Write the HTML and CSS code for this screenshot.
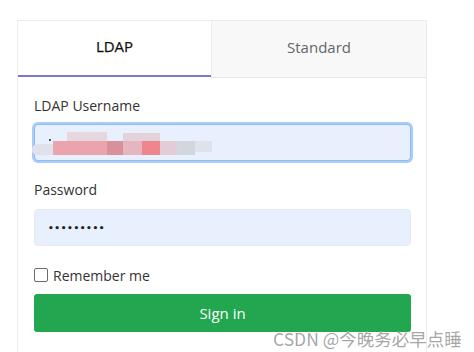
FILE: index.html
```html
<!DOCTYPE html>
<html>
<head>
<meta charset="utf-8">
<link rel="stylesheet" href="styles.css">
</head>
<body>
<div class="card">
  <div class="tabs">
    <div class="tab active">LDAP</div>
    <div class="tab">Standard</div>
  </div>
  <form class="form">
    <label class="label">LDAP Username</label>
    <div class="field">
      <input class="input focused" type="text" value="">
      <div class="mosaic">
        <span class="m m1"></span><span class="m m2"></span><span class="m m3"></span><span class="m m4"></span>
        <span class="m m5"></span><span class="m m6"></span><span class="m m7"></span><span class="m m8"></span>
        <span class="m m9"></span><span class="m m10"></span><span class="m m11"></span>
      </div>
    </div>
    <label class="label pw">Password</label>
    <div class="pwbox">•••••••••</div>
    <div class="remember">
      <span class="check"></span>
      <span>Remember me</span>
    </div>
    <button class="btn" type="button">Sign in</button>
  </form>
</div>
<div class="watermark">CSDN @今晚务必早点睡</div>
</body>
</html>
```
FILE: styles.css
```css
html, body {
  margin: 0;
  padding: 0;
  background: #ffffff;
  font-family: "Open Sans", "Noto Sans", sans-serif;
  color: #333;
  width: 474px;
  height: 352px;
  overflow: hidden;
  position: relative;
}

.card {
  margin: 20px 0 0 17px;
  width: 408px;
  height: 340px;
  border: 1px solid #ececec;
  border-bottom: none;
  box-sizing: content-box;
}

.tabs {
  display: flex;
  height: 56px;
}

.tab {
  display: flex;
  align-items: center;
  justify-content: center;
  font-size: 15px;
  box-sizing: border-box;
  padding-bottom: 4px;
}

.tab.active {
  width: 193px;
  color: #111;
  border-bottom: 2px solid #7c79c9;
  font-weight: 400;
  -webkit-text-stroke: 0.25px #111;
}

.tab:not(.active) {
  flex: 1;
  background: #f8f8f8;
  color: #666;
  border-left: 1px solid #ededed;
  border-bottom: 1px solid #e6e6e6;
  height: 57px;
  padding-bottom: 5px;
}

.form {
  padding: 19px 16px 0 16px;
  display: flex;
  flex-direction: column;
}

.label {
  display: block;
  font-size: 14px;
  line-height: 20px;
  color: #333;
  margin-bottom: 8px;
}

.label.pw {
  margin-top: 19px;
  margin-bottom: 9px;
}

.field {
  position: relative;
  height: 37px;
}

.input {
  display: block;
  box-sizing: border-box;
  width: 377px;
  height: 37px;
  margin: 0;
  border-radius: 4px;
  background: #e8f0fe;
  border: 1px solid #e2e8f3;
  font: inherit;
  outline: none;
}

.input.focused {
  border: 1px solid #8dbdf7;
  box-shadow: 0 0 0 2px #a9cdf8;
}

.pwbox {
  box-sizing: border-box;
  width: 377px;
  height: 37px;
  border-radius: 4px;
  background: #e8f0fe;
  border: 1px solid #e4e9f2;
  padding-left: 13px;
  font-size: 9px;
  line-height: 36px;
  letter-spacing: 0.6px;
  color: #222;
  font-weight: bold;
  font-family: "DejaVu Sans", sans-serif;
}

.mosaic {
  position: absolute;
  left: 0;
  top: 0;
  width: 377px;
  height: 37px;
  pointer-events: none;
}

.m {
  position: absolute;
  display: block;
}

.m1 { left: -2px; top: 20px; width: 21px; height: 11px; background: #dfe2ea; border-radius: 6px 0 0 6px; }
.m2 { left: 19px; top: 17px; width: 54px; height: 14px; background: #eba3ad; }
.m3 { left: 73px; top: 17px; width: 16px; height: 14px; background: #d8909b; }
.m4 { left: 89px; top: 17px; width: 19px; height: 14px; background: #e6b6c0; }
.m5 { left: 108px; top: 17px; width: 18px; height: 14px; background: #ef868d; }
.m6 { left: 126px; top: 17px; width: 17px; height: 14px; background: #e2ccd6; }
.m7 { left: 143px; top: 17px; width: 18px; height: 14px; background: #d2d6de; }
.m8 { left: 161px; top: 17px; width: 17px; height: 11px; background: #dde2eb; }
.m9 { left: 33px; top: 8px; width: 40px; height: 9px; background: #e6d7df; }
.m10 { left: 89px; top: 9px; width: 37px; height: 8px; background: #e4d2db; }
.m11 { left: 15px; top: 15px; width: 2px; height: 2px; background: #555; }

.remember {
  display: flex;
  align-items: center;
  gap: 5px;
  margin-top: 19px;
  height: 20px;
  font-size: 14px;
  color: #333;
}

.check {
  display: inline-block;
  width: 12px;
  height: 12px;
  border: 1px solid #6b6b6b;
  border-radius: 2px;
  background: #fff;
}

.btn {
  margin-top: 9px;
  width: 377px;
  height: 38px;
  border: none;
  border-radius: 3px;
  background: #22a64f;
  color: #fff;
  font-family: inherit;
  font-size: 15px;
  padding: 0;
}

.watermark {
  position: absolute;
  left: 273px;
  top: 327px;
  font-family: "Noto Sans CJK SC", "Liberation Sans", sans-serif;
  font-size: 17.5px;
  line-height: 24px;
  color: rgba(150, 150, 150, 0.85);
  text-shadow: 0 0 1px rgba(255, 255, 255, 0.6);
  white-space: nowrap;
}
```
